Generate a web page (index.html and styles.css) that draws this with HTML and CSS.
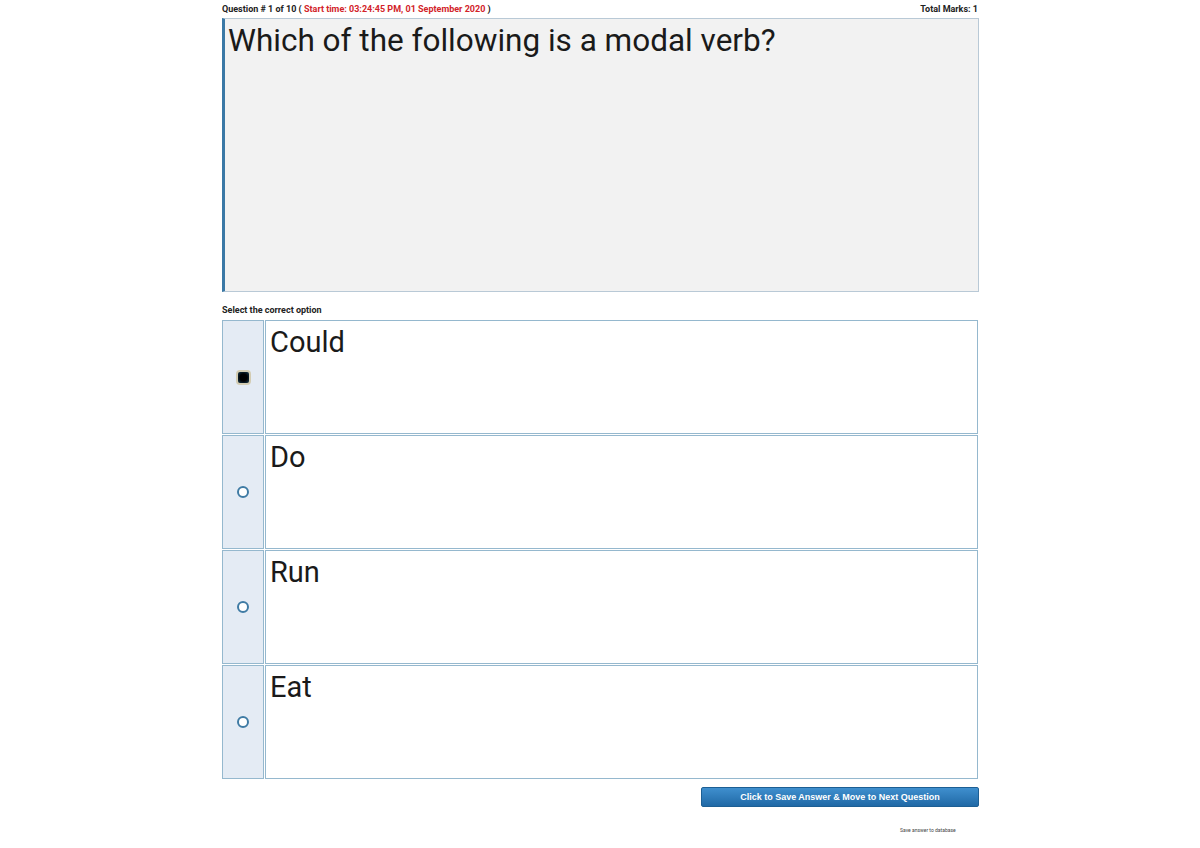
FILE: index.html
```html
<!DOCTYPE html>
<html>
<head>
<meta charset="utf-8">
<link rel="stylesheet" href="styles.css">
</head>
<body>
<div class="page">
  <div class="topbar">
    <div class="qinfo">Question # 1 of 10 ( <span class="time">Start time: 03:24:45 PM, 01 September 2020</span> )</div>
    <div class="marks">Total Marks: 1</div>
  </div>
  <div class="question">Which of the following is a modal verb?</div>
  <div class="select">Select the correct option</div>
  <div class="options">
    <div class="opt">
      <div class="radio-cell"><span class="radio checked"></span></div>
      <div class="text-cell">Could</div>
    </div>
    <div class="opt">
      <div class="radio-cell"><span class="radio"></span></div>
      <div class="text-cell">Do</div>
    </div>
    <div class="opt">
      <div class="radio-cell"><span class="radio"></span></div>
      <div class="text-cell">Run</div>
    </div>
    <div class="opt">
      <div class="radio-cell"><span class="radio"></span></div>
      <div class="text-cell">Eat</div>
    </div>
  </div>
  <div class="actions">
    <button class="btn">Click to Save Answer &amp; Move to Next Question</button>
  </div>
  <div class="footnote">Save answer to database</div>
</div>
</body>
</html>
```
FILE: styles.css
```css
html, body {
  margin: 0;
  padding: 0;
  background: #ffffff;
}
body {
  font-family: Roboto, "Liberation Sans", Arial, sans-serif;
  color: #111;
}
.page {
  width: 757px;
  margin-left: 222px;
  padding-top: 2px;
}
.topbar {
  display: flex;
  justify-content: space-between;
  align-items: center;
  height: 14px;
  font-size: 9px;
  font-weight: bold;
  color: #222;
  padding-right: 1px;
}
.time {
  color: #d2232a;
}
.question {
  margin-top: 2px;
  height: 268px;
  background: #f2f2f2;
  border: 1px solid #b9c9d6;
  border-left: 3px solid #3b79a6;
  font-size: 31.5px;
  line-height: 36px;
  padding: 4px 0 0 3px;
  color: #1a1a1a;
}
.select {
  margin-top: 13px;
  font-size: 9px;
  font-weight: bold;
  color: #222;
  height: 10px;
  line-height: 10px;
}
.options {
  margin-top: 5px;
  display: flex;
  flex-direction: column;
  gap: 1px;
  width: 756px;
}
.opt {
  display: flex;
  height: 114px;
  gap: 1px;
}
.radio-cell {
  width: 40px;
  background: #e4ebf4;
  border: 1px solid #95b8ce;
  display: flex;
  align-items: center;
  justify-content: center;
}
.text-cell {
  flex: 1;
  background: #fff;
  border: 1px solid #95b8ce;
  font-size: 29px;
  line-height: 34px;
  padding: 4px 0 0 4px;
  color: #1a1a1a;
}
.radio {
  width: 8px;
  height: 8px;
  border: 2px solid #3f7ba4;
  border-radius: 50%;
  background: #fff;
}
.radio.checked {
  width: 11px;
  height: 11px;
  background: radial-gradient(circle, #000 0, #000 45%, #0c2230 75%);
  border: 2px solid #d3ccb2;
  border-radius: 4px;
}
.actions {
  display: flex;
  justify-content: flex-end;
  margin-top: 8px;
}
.btn {
  width: 278px;
  height: 20px;
  border: 1px solid #1d5f94;
  border-radius: 2px;
  background: linear-gradient(#3f8fce, #2069a6);
  color: #fff;
  font-family: "Liberation Sans", Arial, sans-serif;
  font-size: 9px;
  font-weight: bold;
  padding: 0;
}
.footnote {
  margin-top: 20px;
  margin-left: 678px;
  font-size: 5px;
  color: #444;
}
```
